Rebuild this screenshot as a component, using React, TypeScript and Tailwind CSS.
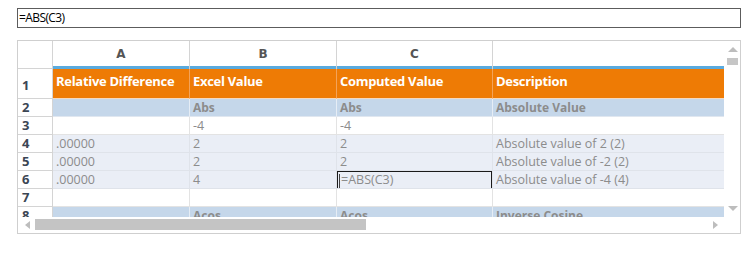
import React from "react";

const F = { fontFamily: '"Open Sans", "Noto Sans", sans-serif' };

type Row = { n: string; cells: [string, string, string, string]; kind: "head" | "sub" | "white" | "data" };

const rows: Row[] = [
  { n: "1", cells: ["Relative Difference", "Excel Value", "Computed Value", "Description"], kind: "head" },
  { n: "2", cells: ["", "Abs", "Abs", "Absolute Value"], kind: "sub" },
  { n: "3", cells: ["", "-4", "-4", ""], kind: "white" },
  { n: "4", cells: [".00000", "2", "2", "Absolute value of 2 (2)"], kind: "data" },
  { n: "5", cells: [".00000", "2", "2", "Absolute value of -2 (2)"], kind: "data" },
  { n: "6", cells: [".00000", "4", "=ABS(C3)", "Absolute value of -4 (4)"], kind: "data" },
  { n: "7", cells: ["", "", "", ""], kind: "white" },
  { n: "8", cells: ["", "Acos", "Acos", "Inverse Cosine"], kind: "sub" },
];

const widths = ["w-[137px]", "w-[147px]", "w-[156px]", "w-[231px]"];

function RowView({ r }: { r: Row }) {
  const h = r.kind === "head" ? "h-[30px]" : "h-[18px]";
  const bg =
    r.kind === "head"
      ? "bg-[#ee7b05] text-white font-bold text-[13px] tracking-[-0.3px] items-start pt-[3px] border-r-[#f3a35a] border-b-[#f5d9bf]"
      : r.kind === "sub"
      ? "bg-[#c5d7ea] text-[#8c8c8c] font-bold text-[12px] items-center pt-[1px] border-r-[#e6edf5] border-b-[#e0e7f0]"
      : r.kind === "data"
      ? "bg-[#eaeef6] text-[#8c8c8c] text-[12.5px] items-center pt-[1px] border-r-[#dfe3ea] border-b-[#dfe3ea]"
      : "bg-white text-[#8c8c8c] text-[12.5px] items-center pt-[1px] border-r-[#e3e3e3] border-b-[#e3e3e3]";
  return (
    <div className={`flex ${h} shrink-0`}>
      <div
        className={`w-[35px] shrink-0 border-r border-b border-[#d4d4d4] bg-white flex items-center pl-[4px] text-[13px] font-bold text-[#3c4654]`}
        style={F}
      >
        <span className={r.kind === "head" ? "mt-[5px]" : "mt-[1px]"}>{r.n}</span>
      </div>
      {r.cells.map((c, i) => {
        const selected = r.n === "6" && i === 2;
        return (
          <div
            key={i}
            className={`${widths[i]} shrink-0 flex ${bg} ${i < 3 ? "border-r" : ""} border-b pl-[3px] whitespace-nowrap overflow-hidden relative`}
            style={F}
          >
            {selected ? (
              <div className="absolute inset-x-0 top-0 bottom-[-1px] border border-[#1a1a1a] flex items-center pl-[1px] pt-[1px] text-[#8c8c8c]">
                <span className="w-[1px] h-[14px] bg-[#444] mr-[1px]" />
                {c}
              </div>
            ) : (
              c
            )}
          </div>
        );
      })}
    </div>
  );
}

export default function App() {
  return (
    <div className="w-[755px] h-[258px] bg-white relative overflow-hidden" style={F}>
      <div className="pt-[8px] pl-[17px]">
        <div className="w-[724px] h-[20px] border border-[#5c5c5c] flex items-center pl-[1px] text-[12px] tracking-[-0.6px] text-black" style={F}>
          =ABS(C3)
        </div>
      </div>
      <div className="mt-[12px] ml-[17px] w-[724px] h-[194px] border border-[#cfcfcf] flex flex-col">
        <div className="flex h-[176px]">
          <div className="w-[706px] h-[176px] overflow-hidden flex flex-col">
            <div className="flex h-[28px] shrink-0">
              <div className="w-[35px] border-r border-b border-[#d4d4d4] bg-white" />
              {["A", "B", "C", ""].map((l, i) => (
                <div
                  key={i}
                  className={`${widths[i]} flex flex-col ${i < 3 ? "border-r border-[#d4d4d4]" : ""}`}
                >
                  <div className="flex-1 flex items-center justify-center pt-[1px] text-[12px] font-bold text-[#555]" style={{ fontFamily: '"DejaVu Sans", sans-serif' }}>
                    {l}
                  </div>
                  <div className="h-[3px] bg-[#5aabdf]" />
                </div>
              ))}
            </div>
            {rows.map((r) => (
              <RowView key={r.n} r={r} />
            ))}
          </div>
          <div className="w-[16px] h-[176px] relative">
            <div className="absolute left-[4px] top-[6px] w-0 h-0 border-l-[5px] border-r-[5px] border-b-[5px] border-l-transparent border-r-transparent border-b-[#bdbdbd]" />
            <div className="absolute left-[3px] top-[17px] w-[11px] h-[7px] bg-[#c6c6c6]" />
            <div className="absolute left-[4px] top-[165px] w-0 h-0 border-l-[5px] border-r-[5px] border-t-[5px] border-l-transparent border-r-transparent border-t-[#bdbdbd]" />
          </div>
        </div>
        <div className="h-[16px] flex items-center relative">
          <div className="absolute left-[7px] top-[4px] w-0 h-0 border-t-[4px] border-b-[4px] border-r-[5px] border-t-transparent border-b-transparent border-r-[#bdbdbd]" />
          <div className="absolute left-[17px] top-[2px] w-[331px] h-[11px] bg-[#c4c4c4]" />
          <div className="absolute left-[695px] top-[4px] w-0 h-0 border-t-[4px] border-b-[4px] border-l-[5px] border-t-transparent border-b-transparent border-l-[#bdbdbd]" />
        </div>
      </div>
    </div>
  );
}
